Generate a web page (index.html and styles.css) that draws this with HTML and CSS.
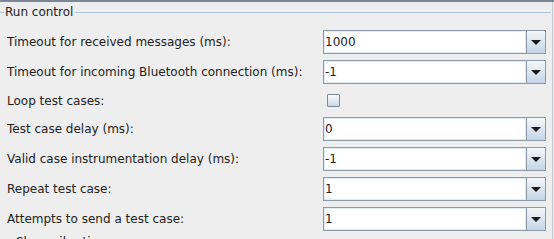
FILE: index.html
```html
<!DOCTYPE html>
<html lang="en">
<head>
    <meta charset="UTF-8">
    <title>Run control</title>
    <link rel="stylesheet" href="styles.css">
</head>
<body>
    <div class="topbar"></div>
    <div class="frame">
        <div class="group-title">
            <span class="line-start"></span>
            <span class="title">Run control</span>
            <span class="line-end"></span>
        </div>

        <div class="form">
            <div class="row">
                <label>Timeout for received messages (ms):</label>
                <div class="combo"><input type="text" value="1000"><span class="arrow"></span></div>
            </div>
            <div class="row">
                <label>Timeout for incoming Bluetooth connection (ms):</label>
                <div class="combo"><input type="text" value="-1"><span class="arrow"></span></div>
            </div>
            <div class="row row-check">
                <label>Loop test cases:</label>
                <div class="check-cell"><span class="checkbox"></span></div>
            </div>
            <div class="row">
                <label>Test case delay (ms):</label>
                <div class="combo"><input type="text" value="0"><span class="arrow"></span></div>
            </div>
            <div class="row">
                <label>Valid case instrumentation delay (ms):</label>
                <div class="combo"><input type="text" value="-1"><span class="arrow"></span></div>
            </div>
            <div class="row">
                <label>Repeat test case:</label>
                <div class="combo"><input type="text" value="1"><span class="arrow"></span></div>
            </div>
            <div class="row">
                <label>Attempts to send a test case:</label>
                <div class="combo"><input type="text" value="1"><span class="arrow"></span></div>
            </div>
        </div>

        <div class="more">Show vibrations</div>
    </div>
</body>
</html>
```

FILE: styles.css
```css
* {
    box-sizing: border-box;
}
html, body {
    margin: 0;
    height: 100%;
    overflow: hidden;
}
body {
    font-family: "DejaVu Sans", sans-serif;
    font-size: 12px;
    color: #222;
    background-color: #eeeeee;
}
.topbar {
    height: 2px;
    background-color: #7c8795;
}
.frame {
    width: 553px;
    height: 237px;
    border-right: 1px solid #c3cbd4;
    padding-top: 3px;
}
.group-title {
    display: flex;
    align-items: center;
    height: 15px;
}
.line-start,
.line-end {
    height: 1px;
    background-color: #a9c6e3;
}
.line-start {
    width: 4px;
}
.line-end {
    flex: 1;
    margin-right: 1px;
}
.title {
    padding: 0 2px 0 1px;
    line-height: 15px;
}
.form {
    display: flex;
    flex-direction: column;
    gap: 6px;
    margin-top: 10px;
    padding-left: 7px;
}
.row {
    display: flex;
    align-items: center;
    height: 24px;
}
.row-check {
    height: 21px;
}
.row label {
    width: 316px;
}
.combo {
    display: flex;
    width: 223px;
    height: 24px;
    border: 1px solid #8b99a8;
    background-color: #fff;
}
.combo input {
    flex: 1;
    min-width: 0;
    border: none;
    box-shadow: inset 0 0 0 1px #e2eaf2;
    padding: 0 0 0 1px;
    font-family: "DejaVu Sans", sans-serif;
    font-size: 12px;
    color: #222;
    background: #fff;
    outline: none;
}
.arrow {
    position: relative;
    width: 19px;
    border-left: 1px solid #8b99a8;
    background: linear-gradient(#f4f7fa, #c4d5e6);
}
.arrow::after {
    content: "";
    position: absolute;
    left: 4px;
    top: 9px;
    border-left: 5px solid transparent;
    border-right: 5px solid transparent;
    border-top: 5px solid #1a1a1a;
}
.check-cell {
    width: 223px;
    padding-left: 4px;
    display: flex;
    align-items: center;
}
.checkbox {
    width: 13px;
    height: 13px;
    border: 1px solid #7d8a98;
    border-radius: 1px;
    background: linear-gradient(#fbfcfd, #c9d9e8);
}
.more {
    margin-top: 4px;
    padding-left: 16px;
}
```
